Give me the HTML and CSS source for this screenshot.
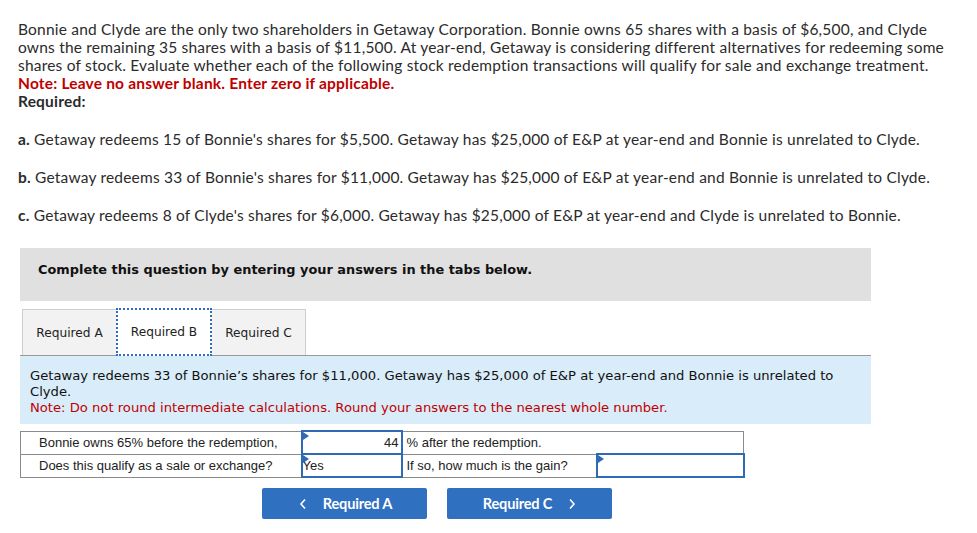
FILE: index.html
```html
<!DOCTYPE html>
<html>
<head>
<meta charset="utf-8">
<link rel="stylesheet" href="styles.css">
</head>
<body>
<div class="page">
  <div class="intro">
    <p class="lead">Bonnie and Clyde are the only two shareholders in Getaway Corporation. Bonnie owns 65 shares with a basis of $6,500, and Clyde owns the remaining 35 shares with a basis of $11,500. At year-end, Getaway is considering different alternatives for redeeming some shares of stock. Evaluate whether each of the following stock redemption transactions will qualify for sale and exchange treatment.</p>
    <p class="note">Note: Leave no answer blank. Enter zero if applicable.</p>
    <p class="req">Required:</p>
    <p class="item"><b>a.</b> Getaway redeems 15 of Bonnie's shares for $5,500. Getaway has $25,000 of E&amp;P at year-end and Bonnie is unrelated to Clyde.</p>
    <p class="item"><b>b.</b> Getaway redeems 33 of Bonnie's shares for $11,000. Getaway has $25,000 of E&amp;P at year-end and Bonnie is unrelated to Clyde.</p>
    <p class="item"><b>c.</b> Getaway redeems 8 of Clyde's shares for $6,000. Getaway has $25,000 of E&amp;P at year-end and Clyde is unrelated to Bonnie.</p>
  </div>

  <div class="work">
    <div class="banner">Complete this question by entering your answers in the tabs below.</div>
    <div class="tabs">
      <div class="tab">Required A</div>
      <div class="tab active">Required B</div>
      <div class="tab">Required C</div>
    </div>
    <div class="prompt">
      <p>Getaway redeems 33 of Bonnie’s shares for $11,000. Getaway has $25,000 of E&amp;P at year-end and Bonnie is unrelated to Clyde.</p>
      <p class="red">Note: Do not round intermediate calculations. Round your answers to the nearest whole number.</p>
    </div>
    <table class="answers">
      <tr>
        <td class="label">Bonnie owns 65% before the redemption,</td>
        <td class="input num"><span class="flag"></span>44</td>
        <td class="text" colspan="2">% after the redemption.</td>
      </tr>
      <tr>
        <td class="label">Does this qualify as a sale or exchange?</td>
        <td class="input"><span class="flag"></span>Yes</td>
        <td class="text">If so, how much is the gain?</td>
        <td class="input last"><span class="flag"></span></td>
      </tr>
    </table>
    <div class="nav">
      <button class="btn"><svg class="chev" width="8" height="12" viewBox="0 0 8 12"><polyline points="6,1.5 2,6 6,10.5" fill="none" stroke="#fff" stroke-width="1.6"/></svg><span>Required A</span></button>
      <button class="btn"><span>Required C</span><svg class="chev right" width="8" height="12" viewBox="0 0 8 12"><polyline points="2,1.5 6,6 2,10.5" fill="none" stroke="#fff" stroke-width="1.6"/></svg></button>
    </div>
  </div>
</div>
</body>
</html>
```

FILE: styles.css
```css
html, body {
  margin: 0;
  padding: 0;
  background: #ffffff;
}
.page {
  padding: 20px 0 0 18px;
  width: 936px;
  color: #2b2b2b;
}
.intro {
  font-family: Lato, "Liberation Sans", sans-serif;
  font-size: 15.5px;
  letter-spacing: 0.2px;
  line-height: 18px;
}
.intro p {
  margin: 0;
}
.note {
  color: #c00000;
  font-weight: bold;
}
.req {
  font-weight: bold;
}
.intro .req {
  margin-bottom: 20px;
}
.intro .item {
  margin-bottom: 20px;
}
.intro .item:last-child {
  margin-bottom: 0;
}
.work {
  margin-left: 2px;
  width: 851px;
  margin-top: 24px;
}
.banner {
  background: #e0e0e0;
  font-family: "DejaVu Sans", Verdana, sans-serif;
  font-weight: bold;
  font-size: 12.9px;
  color: #111;
  height: 53px;
  box-sizing: border-box;
  padding: 14px 0 0 18px;
}
.tabs {
  display: flex;
  margin-top: 8px;
  padding-left: 2px;
  border-bottom: 1px solid #999;
}
.tab {
  font-family: "DejaVu Sans", Verdana, sans-serif;
  font-size: 12.2px;
  color: #222;
  background: #f2f2f2;
  border: 1px solid #cfcfcf;
  border-bottom: none;
  height: 46px;
  box-sizing: border-box;
  width: 95px;
  display: flex;
  align-items: center;
  justify-content: center;
  margin-right: -1px;
}
.tab.active {
  background: #ffffff;
  border: 2px dotted #2e6cc0;
  width: 96px;
  height: 48px;
  margin-top: -1px;
  margin-bottom: -1px;
  position: relative;
  z-index: 1;
}
.prompt {
  background: #d9ecf9;
  font-family: "DejaVu Sans", Verdana, sans-serif;
  font-size: 13.15px;
  line-height: 16px;
  color: #111;
  padding: 12px 30px 8px 10px;
  height: 68px;
  box-sizing: border-box;
}
.prompt p {
  margin: 0;
}
.prompt .red {
  color: #c00000;
}
.answers {
  margin-top: 6px;
  border-collapse: collapse;
  font-family: "Liberation Sans", Arial, sans-serif;
  font-size: 13px;
  color: #222;
}
.answers td {
  border: 1px solid #8a8a8a;
  height: 23px;
  padding: 0;
  box-sizing: border-box;
}
.answers .label {
  width: 281px;
  padding-left: 18px;
}
.answers .input {
  position: relative;
  border: 2px solid #2f6bb4;
  width: 100px;
}
.answers td.last {
  width: 147px;
}
.answers .num {
  text-align: right;
  padding-right: 2px;
}
.answers .text {
  padding-left: 4px;
  width: 195px;
}
.flag {
  position: absolute;
  left: 0;
  top: 0;
  width: 0;
  height: 0;
  border-top: 4px solid transparent;
  border-bottom: 4px solid transparent;
  border-left: 6px solid #2f6bb4;
}
.nav {
  display: flex;
  gap: 20px;
  margin-top: 10px;
  padding-left: 242px;
}
.btn {
  width: 165px;
  height: 31px;
  background: #2f70c1;
  color: #ffffff;
  border: none;
  border-radius: 2px;
  font-family: Lato, "Liberation Sans", sans-serif;
  font-weight: bold;
  font-size: 14.6px;
  letter-spacing: -0.2px;
  display: flex;
  align-items: center;
  justify-content: center;
  padding: 0;
}
.chev {
  margin-right: 16px;
  margin-left: 2px;
}
.chev.right {
  margin-left: 16px;
  margin-right: 0;
}
```
